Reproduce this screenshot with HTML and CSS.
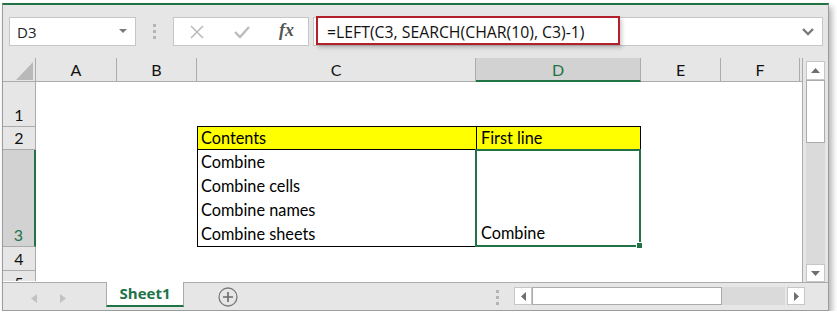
FILE: index.html
```html
<!DOCTYPE html>
<html lang="en">

<head>
    <meta charset="UTF-8">
    <title>Sheet1 - Excel</title>
    <link rel="stylesheet" href="styles.css">
</head>

<body>
    <div class="window">
        <!-- barra da formula -->
        <div class="toolbar">
            <div class="namebox">
                <span class="nb-text">D3</span>
                <svg class="nb-arrow" width="8" height="5" viewBox="0 0 8 5"><path d="M0 0h8L4 4z" fill="#7a7a7a"/></svg>
            </div>
            <div class="grip"><i></i><i></i><i></i></div>
            <div class="fxbox">
                <svg width="16" height="16" viewBox="0 0 16 16"><path d="M2 2l12 12M14 2L2 14" stroke="#bcbcbc" stroke-width="1.6" fill="none"/></svg>
                <svg width="18" height="16" viewBox="0 0 18 16"><path d="M2 8l5 5L16 3" stroke="#bcbcbc" stroke-width="2.4" fill="none"/></svg>
                <span class="fx">fx</span>
            </div>
            <div class="formula">
                <span class="f-text">=LEFT(C3, SEARCH(CHAR(10), C3)-1)</span>
                <svg class="chevron" width="12" height="8" viewBox="0 0 12 8"><path d="M1 1l5 5 5-5" stroke="#7a7a7a" stroke-width="2.4" fill="none"/></svg>
                <div class="mark"></div>
            </div>
        </div>

        <div class="sheet">
            <div class="grid">
                <div class="corner"><svg width="17" height="18" viewBox="0 0 17 18"><path d="M17 0v18H0z" fill="#b9b9b9"/></svg></div>
                <div class="colhdr">A</div>
                <div class="colhdr">B</div>
                <div class="colhdr">C</div>
                <div class="colhdr sel">D</div>
                <div class="colhdr">E</div>
                <div class="colhdr">F</div>
                <div class="colhdr last"></div>

                <div class="rowhdr">1</div>
                <div class="rowhdr">2</div>
                <div class="rowhdr sel">3</div>
                <div class="rowhdr">4</div>
                <div class="rowhdr cut">5</div>

                <div class="cell c2 head">Contents</div>
                <div class="cell d2 head">First line</div>
                <div class="cell c3">Combine<br>Combine cells<br>Combine names<br>Combine sheets</div>
                <div class="cell d3">Combine<span class="handle"></span></div>
            </div>
            <div class="vscroll">
                <div class="sbtn up"><svg width="9" height="5" viewBox="0 0 9 5"><path d="M0 5h9L4.5 0z" fill="#6f6f6f"/></svg></div>
                <div class="vthumb"></div>
                <div class="vtrack"></div>
                <div class="sbtn down"><svg width="9" height="5" viewBox="0 0 9 5"><path d="M0 0h9L4.5 5z" fill="#6f6f6f"/></svg></div>
            </div>
        </div>

        <div class="tabbar">
            <div class="nav">
                <svg width="6" height="9" viewBox="0 0 6 9"><path d="M6 0v9L0 4.5z" fill="#c2c2c2"/></svg>
                <svg width="6" height="9" viewBox="0 0 6 9"><path d="M0 0v9l6-4.5z" fill="#c2c2c2"/></svg>
            </div>
            <div class="tab">Sheet1</div>
            <div class="addsheet">
                <svg width="20" height="20" viewBox="0 0 20 20"><circle cx="10" cy="10" r="9" stroke="#7a7a7a" stroke-width="1.3" fill="none"/><path d="M10 5v10M5 10h10" stroke="#6a6a6a" stroke-width="1.6"/></svg>
            </div>
            <div class="grip hgrip"><i></i><i></i><i></i></div>
            <div class="hscroll">
                <div class="sbtn"><svg width="5" height="9" viewBox="0 0 5 9"><path d="M5 0v9L0 4.5z" fill="#6f6f6f"/></svg></div>
                <div class="hthumb"></div>
                <div class="htrack"></div>
                <div class="sbtn"><svg width="5" height="9" viewBox="0 0 5 9"><path d="M0 0v9l5-4.5z" fill="#6f6f6f"/></svg></div>
            </div>
        </div>
    </div>
</body>

</html>
```

FILE: styles.css
```css
body {
    margin: 0;
    background: #ffffff;
    font-family: 'Lato', sans-serif;
}

.window {
    box-sizing: border-box;
    margin: 3px 0 0 2px;
    width: 827px;
    height: 308px;
    background-color: #e6e6e6;
    border: 1px solid #9c9c9c;
    border-top: 2px solid #217346;
    box-shadow: 3px 4px 6px rgba(0, 0, 0, 0.3);
    display: flex;
    flex-direction: column;
}

/* toolbar */
.toolbar {
    height: 53px;
    box-sizing: border-box;
    padding: 12px 5px 0 6px;
    display: flex;
    align-items: flex-start;
}

.namebox,
.fxbox,
.formula {
    box-sizing: border-box;
    height: 29px;
    background-color: #ffffff;
    border: 1px solid #c6c6c6;
    display: flex;
    align-items: center;
}

.namebox {
    width: 127px;
    padding: 0 8px 0 7px;
    justify-content: space-between;
    font-family: 'Open Sans', sans-serif;
    font-size: 15px;
    color: #222;
}

.grip {
    display: flex;
    flex-direction: column;
    gap: 3px;
    margin: 7px 17px 0 17px;
}

.grip i {
    display: block;
    width: 3px;
    height: 3px;
    background-color: #b4b4b4;
}

.fxbox {
    width: 136px;
    padding: 0 14px 0 15px;
    justify-content: space-between;
}

.fx {
    font-family: 'Liberation Serif', serif;
    font-style: italic;
    font-weight: bold;
    font-size: 18px;
    color: #555;
    margin-top: -2px;
}

.formula {
    flex: 1;
    margin-left: 4px;
    position: relative;
    padding: 0 8px 0 13px;
    justify-content: space-between;
    font-family: 'Open Sans', sans-serif;
    font-size: 15.8px;
    color: #111;
}

.mark {
    position: absolute;
    left: 2px;
    top: -2px;
    width: 304px;
    height: 29px;
    box-sizing: border-box;
    border: 2px solid #b2202a;
    box-shadow: 2px 3px 4px rgba(0, 0, 0, 0.2);
}

/* planilha */
.sheet {
    flex: 1;
    display: flex;
}

.grid {
    width: 799px;
    display: grid;
    grid-template-columns: 33px 81px 80px 279px 165px 80px 79px 2px;
    grid-template-rows: 24px 45px 23px 97px 24px 10px;
    background-color: #ffffff;
    border-right: 1px solid #ababab;
    overflow: hidden;
}

.corner,
.colhdr {
    box-sizing: border-box;
    background-color: #e6e6e6;
    border-right: 1px solid #ababab;
    border-bottom: 1px solid #ababab;
    font-size: 16px;
    color: #111;
    display: flex;
    align-items: center;
    justify-content: center;
}

.corner {
    align-items: flex-end;
    justify-content: flex-end;
    padding: 0 2px 1px 0;
}

.colhdr.last {
    border-right: 0;
}

.colhdr.sel {
    background-color: #d2d2d2;
    border-bottom: 2px solid #217346;
    color: #217346;
}

.rowhdr {
    grid-column: 1;
    box-sizing: border-box;
    background-color: #e6e6e6;
    border-right: 1px solid #ababab;
    border-bottom: 1px solid #ababab;
    font-size: 16px;
    line-height: 20px;
    color: #111;
    display: flex;
    align-items: flex-end;
    justify-content: center;
    padding-bottom: 1px;
    overflow: hidden;
}

.rowhdr.cut {
    align-items: flex-start;
    padding-top: 2px;
    border-bottom: 0;
}

.rowhdr.sel {
    background-color: #d2d2d2;
    border-right: 2px solid #217346;
    color: #217346;
}

.cell {
    box-sizing: border-box;
    font-size: 16.3px;
    line-height: 24px;
    color: #000;
    padding-left: 3px;
    display: flex;
    flex-direction: column;
    justify-content: flex-end;
}

.cell.head {
    background-color: #ffff00;
    border-top: 1px solid #000;
    border-bottom: 1px solid #000;
    line-height: 22px;
}

.c2 {
    grid-area: 3 / 4;
    border-left: 1px solid #000;
    margin-top: -1px;
}

.d2 {
    grid-area: 3 / 5;
    border-left: 1px solid #000;
    border-right: 1px solid #000;
    margin-top: -1px;
    padding-left: 4px;
}

.c3 {
    grid-area: 4 / 4;
    border-left: 1px solid #000;
    border-bottom: 1px solid #000;
    display: block;
    padding-top: 0;
}

.d3 {
    grid-area: 4 / 5;
    position: relative;
    border: 2px solid #217346;
    margin: -1px 0 0 -1px;
    padding-left: 4px;
}

.handle {
    position: absolute;
    right: -4px;
    bottom: -4px;
    width: 5px;
    height: 5px;
    background-color: #217346;
    border: 1px solid #ffffff;
}

/* barras de rolagem */
.vscroll {
    flex: 1;
    padding: 3px 0 0 3px;
    display: flex;
    flex-direction: column;
    width: 18px;
}

.sbtn {
    box-sizing: border-box;
    width: 18px;
    height: 18px;
    background-color: #ffffff;
    border: 1px solid #c6c6c6;
    display: flex;
    align-items: center;
    justify-content: center;
}

.vscroll .sbtn {
    width: 19px;
}

.sbtn.up {
    height: 19px;
}

.vthumb {
    box-sizing: border-box;
    width: 19px;
    height: 63px;
    background-color: #ffffff;
    border: 1px solid #ababab;
}

.vtrack {
    flex: 1;
    width: 19px;
    background-color: #dadada;
}

.tabbar {
    height: 28px;
    box-sizing: border-box;
    border-top: 1px solid #ababab;
    display: flex;
    align-items: flex-start;
    padding-right: 23px;
}

.nav {
    width: 103px;
    display: flex;
    gap: 23px;
    padding: 11px 0 0 28px;
    box-sizing: border-box;
}

.tab {
    box-sizing: border-box;
    width: 78px;
    height: 25px;
    margin-top: -1px;
    background-color: #ffffff;
    border-left: 1px solid #ababab;
    border-right: 1px solid #ababab;
    border-bottom: 2px solid #217346;
    font-family: 'Open Sans', sans-serif;
    font-weight: bold;
    font-size: 15px;
    color: #217346;
    text-align: center;
    line-height: 22px;
}

.addsheet {
    margin: 4px 0 0 34px;
}

.hgrip {
    margin: 7px 15px 0 auto;
}

.hscroll {
    display: flex;
    margin-top: 4px;
    height: 18px;
}

.hthumb {
    box-sizing: border-box;
    width: 190px;
    background-color: #ffffff;
    border: 1px solid #ababab;
}

.htrack {
    width: 63px;
    margin-right: 2px;
    background-color: #dadada;
}
```
